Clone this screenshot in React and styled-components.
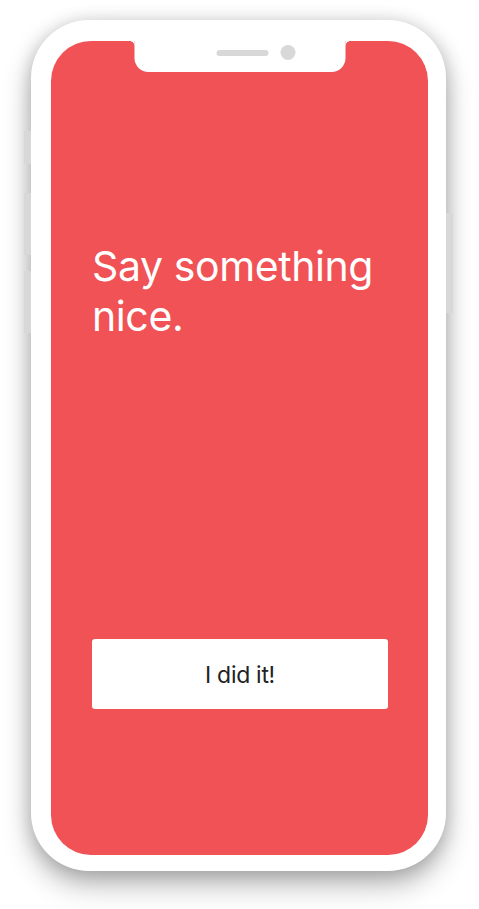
import React from "react";
import styled, { createGlobalStyle } from "styled-components";

const Global = createGlobalStyle`
  html, body { margin: 0; padding: 0; background: #ffffff; }
  body { width: 479px; height: 909px; overflow: hidden; font-family: Inter, "Noto Sans", sans-serif; }
`;

const Stage = styled.div`
  width: 479px;
  height: 909px;
  padding: 20px 0 0 31px;
  box-sizing: border-box;
`;

const Phone = styled.div`
  position: relative;
  width: 415px;
  height: 851px;
  box-sizing: border-box;
  padding: 21px 18px 16px 20px;
  background: #ffffff;
  border-radius: 58px;
  box-shadow: 0 14px 28px rgba(0, 0, 0, 0.28), 0 2px 18px rgba(0, 0, 0, 0.18);
  display: flex;
`;

const SideKey = styled.div`
  position: absolute;
  width: 7px;
  background: #d8d8d8;
  top: ${(p) => p.$top}px;
  height: ${(p) => p.$h}px;
  ${(p) => (p.$right ? "right: -7px;" : "left: -7px;")}
`;

const Screen = styled.div`
  position: relative;
  flex: 1;
  background: #f05255;
  border-radius: 40px;
  display: flex;
  flex-direction: column;
  padding: 0 40px 146px 41px;
  overflow: hidden;
`;

const Notch = styled.div`
  position: absolute;
  top: 0;
  left: 50%;
  transform: translateX(-50%);
  width: 211px;
  height: 31px;
  background: #ffffff;
  border-radius: 0 0 14px 14px;
  display: flex;
  align-items: center;
  justify-content: center;
  gap: 12px;
  padding-left: 32px;
  box-sizing: border-box;
  padding-bottom: 8px;

  &::before, &::after {
    content: "";
    position: absolute;
    top: 0;
    width: 6px;
    height: 6px;
  }
  &::before {
    left: -6px;
    background: radial-gradient(circle at 0 100%, transparent 6px, #ffffff 6.5px);
  }
  &::after {
    right: -6px;
    background: radial-gradient(circle at 100% 100%, transparent 6px, #ffffff 6.5px);
  }
`;

const Speaker = styled.div`
  width: 52px;
  height: 6px;
  border-radius: 3px;
  background: #d8d8d8;
`;

const Camera = styled.div`
  width: 15px;
  height: 15px;
  border-radius: 50%;
  background: #d8d8d8;
`;

const Title = styled.h1`
  margin: 200px 0 0 0;
  color: #ffffff;
  font-family: Inter, "Noto Sans", sans-serif;
  font-weight: 400;
  font-size: 41px;
  line-height: 50px;
  letter-spacing: -0.4px;
`;

const ActionButton = styled.button`
  margin-top: auto;
  height: 70px;
  width: 296px;
  border: none;
  border-radius: 3px;
  background: #ffffff;
  color: #222222;
  font-family: Inter, "Noto Sans", sans-serif;
  font-size: 23px;
  font-weight: 400;
  letter-spacing: -0.3px;
  padding-top: 3px;
  cursor: pointer;
`;

export default function App() {
  return (
    <>
      <Global />
      <Stage>
        <Phone>
          <SideKey $top={111} $h={33} />
          <SideKey $top={173} $h={62} />
          <SideKey $top={251} $h={62} />
          <SideKey $right $top={193} $h={100} />
          <Screen>
            <Notch>
              <Speaker />
              <Camera />
            </Notch>
            <Title>Say something nice.</Title>
            <ActionButton>I did it!</ActionButton>
          </Screen>
        </Phone>
      </Stage>
    </>
  );
}
